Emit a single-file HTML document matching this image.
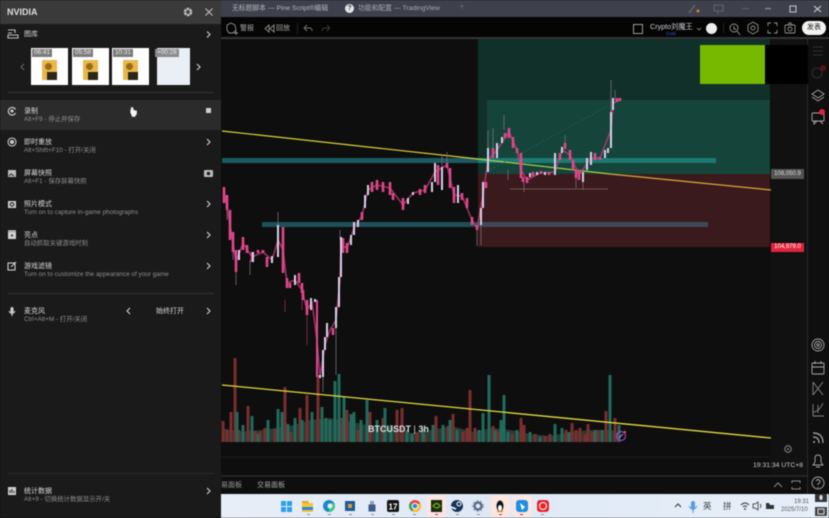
<!DOCTYPE html>
<html lang="zh"><head><meta charset="utf-8"><title>NVIDIA overlay</title>
<style>
html,body{margin:0;padding:0;background:#0e0e0e}
#w{position:relative;width:829px;height:518px;overflow:hidden;background:#0e0e0e;filter:blur(.55px);font-family:"Liberation Sans","Noto Sans CJK SC",sans-serif}
#w div{position:absolute;white-space:nowrap}
.t{left:24px;font-size:7px;line-height:9px;color:#d8d8d8}
.s{left:24px;font-size:6.4px;line-height:8px;color:#8e8e8e}
.th{background:#fff;height:37px;top:48px}
.lb{background:#7b7b7b;color:#eee;font-size:6.4px;line-height:8px;top:49px;height:8px;padding:0 2px}
.sep{background:#333;height:1px;left:8px;width:206px}
svg{position:absolute;overflow:visible}
</style></head><body><div id="w">

<!-- browser tabs -->
<div style="left:221px;top:0;width:608px;height:17px;background:#3e404c"></div>
<div style="left:232px;top:4px;font-size:6.8px;line-height:9px;color:#b4b6bd">无标题脚本 — Pine Script®编辑</div>
<div style="left:358px;top:4px;font-size:6.8px;line-height:9px;color:#a8aab2">功能和配置 — TradingView</div>
<div style="left:345px;top:4px;width:9px;height:9px;border-radius:50%;background:#e6e6e8;color:#3e404c;font-size:7px;line-height:9px;text-align:center;font-weight:bold">?</div>
<div style="left:459px;top:3px;font-size:10px;line-height:10px;color:#62646f">+</div>

<!-- toolbar -->
<div style="left:221px;top:17px;width:608px;height:21px;background:#050505"></div>
<div style="left:221px;top:37px;width:608px;height:2px;background:#333"></div>
<div style="left:240px;top:24px;font-size:7px;line-height:9px;color:#aaa">警报</div>
<div style="left:276px;top:24px;font-size:7px;line-height:9px;color:#aaa">回放</div>
<div style="left:297px;top:23px;width:1px;height:11px;background:#222"></div>
<div style="left:650px;top:22px;font-size:7.2px;line-height:9px;color:#ccc">Crypto刘魔王</div>
<div style="left:666px;top:31px;font-size:4.5px;line-height:5px;color:#3b5bd6">Gold</div>
<div style="left:633px;top:24px;width:8px;height:8px;border:1px solid #999"></div>
<div style="left:706px;top:23px;width:11px;height:11px;border-radius:50%;background:#eee"></div>
<div style="left:723px;top:23px;width:1px;height:10px;background:#222"></div>
<div style="left:802px;top:21px;width:24px;height:14px;border-radius:7px;background:#f2f2f2;color:#222;font-size:7px;line-height:14px;text-align:center">发表</div>

<!-- chart zones -->
<div style="left:478px;top:39px;width:292px;height:61px;background:#12302a"></div>
<div style="left:478px;top:100px;width:9px;height:74px;background:#12302a"></div>
<div style="left:487px;top:100px;width:283px;height:74px;background:#15443a"></div>
<div style="left:478px;top:174px;width:292px;height:73px;background:#3a1a1c"></div>
<div style="left:222px;top:158px;width:256px;height:5px;background:#1b5a62"></div>
<div style="left:478px;top:158px;width:238px;height:5px;background:#1c7a70"></div>
<div style="left:262px;top:222px;width:216px;height:5px;background:#1d5058"></div>
<div style="left:478px;top:222px;width:230px;height:5px;background:#3e4a55"></div>
<div style="left:771px;top:39px;width:36px;height:437px;background:#111"></div>
<div style="left:807px;top:39px;width:1px;height:455px;background:#2a2a2a"></div>
<div style="left:808px;top:39px;width:21px;height:455px;background:#0f0f0f"></div>
<div style="left:700px;top:45px;width:65px;height:39px;background:#76b900"></div>
<div style="left:765px;top:45px;width:43px;height:39px;background:#000"></div>

<svg style="left:0;top:0" width="829" height="518" viewBox="0 0 829 518" fill="none">
<!-- volume underlay -->
<path fill="#2a3a34" d="M222 442V428L240 432L262 430L290 426L310 420L330 418L352 422L372 426L392 428L412 433L432 430L452 426L472 432L492 428L510 430L530 434L550 436L570 432L590 430L610 430L618 432V442Z"/>
<!-- volume -->
<path stroke="#7a2e2e" stroke-width="3" d="M223 421V442M227 430V442M231 412V442M235 358V442M239 430V442M248 406V442M255 431V442M260 432V442M265 428V442M275 429V442M285 387V442M291 432V442M300 408V442M307 395V442M318 375V442M342 418V442M347 410V442M358 430V442M370 412V442M383 418V442M397 410V442M402 408V442M417 432V442M425 434V442M436 416V442M448 426V442M453 414V442M463 432V442M467 428V442M470 390V442M475 428V442M493 426V442M498 431V442M512 434V442M521 418V442M524 425V442M535 434V442M545 436V442M550 434V442M566 430V442M572 423V442M576 430V442M580 428V442M585 434V442M588 424V442M592 432V442M598 430V442M606 411V442M615 418V442"/>
<path stroke="#1f6b5c" stroke-width="3" d="M237 412V442M243 425V442M252 416V442M258 434V442M268 420V442M278 409V442M282 412V442M288 424V442M295 418V442M302 420V442M312 412V442M322 407V442M326 418V442M330 420V442M335 381V442M339 374V442M344 397V442M351 414V442M354 412V442M361 420V442M367 400V442M377 420V442M385 408V442M391 425V442M407 430V442M412 434V442M423 428V442M433 425V442M443 425V442M450 420V442M457 430V442M479 430V442M483 413V442M489 375V442M495 430V442M501 420V442M504 395V442M508 432V442M517 430V442M530 432V442M540 437V442M555 424V442M562 428V442M569 432V442M595 430V442M602 430V442M610 375V442M619 425V442"/>
<!-- trend lines -->
<path stroke="#d9d23a" stroke-width="1.2" d="M222 131L478 159"/>
<path stroke="#a9d24a" stroke-width="1.2" d="M478 159L610 174"/>
<path stroke="#dba93a" stroke-width="1.2" d="M610 174L771 190"/>
<path stroke="#e2dc3c" stroke-width="1.3" d="M222 385L771 438"/>
<path stroke="#6d5555" stroke-width="1" d="M510 189H608"/>
<path stroke="#2c6a58" stroke-width=".6" stroke-dasharray="2 2" d="M490 170L610 105"/>
<!-- wicks -->
<path stroke="#7a6a78" stroke-width=".8" d="M611 80V112M615 90V100M504 115V130M493 128V150M488 130V150M236 272V285M323 377V392M336 328V375M340 230V240M227 210V220M278 212V226M442 155V170M447 152V165M481 225V245M477 230V246M576 178V188M583 182V190M508 170V180M565 135V145M524 182V192M233 252V260M250 260V275"/>
<path stroke="#8c2a58" stroke-width=".8" d="M307 315V345M285 300V312M302 293V310"/>
<!-- continuity underlay -->
<path stroke="#c2407e" stroke-width="1.6" opacity=".75" stroke-linejoin="round" d="M224 190L230 225L236 262L243 243L252 257L263 252L272 260L278 240L283 250L287 283L295 280L302 290L307 310L312 302L317 340L320 377L325 345L330 330L336 320L340 280L341 245L347 248L354 228L362 216L368 190L377 185L390 188L403 205L413 193L425 190L435 172L447 165L454 195L462 196L472 220L477 228L483 195L488 160L497 150L509 132L517 150L521 170L527 180L540 173L555 172L562 150L570 155L579 175L591 158L600 158L611 130L613 103L620 100"/>
<!-- candles -->
<path stroke="#e0478a" stroke-width="2.6" d="M224 187V203M227 195V210M230 210V240M233 232V252M236 250V272M243 237V250M247 245V253M252 252V262M258 250V253M263 250V253M267 257V267M283 227V273M287 278V288M290 283V288M299 273V283M302 283V293M303 290V300M307 300V315M333 328V335M343 238V253M347 243V253M362 212V220M372 182V192M377 180V190M383 182V192M390 182V195M393 193V200M403 198V210M420 189V195M425 185V193M438 165V185M447 163V168M450 168V188M454 187V203M462 193V200M467 198V208M472 217V225M477 225V230M486 182V188M493 148V158M505 133V138M509 128V138M513 137V148M517 148V153M521 153V178M523 177V182M527 177V183M533 172V176M541 171V174M549 172V175M560 153V160M565 143V149M570 150V160M573 160V170M576 170V178M579 170V180M595 153V160M600 157V160M617 98V102M620 98V101"/>
<path stroke="#e0478a" stroke-width="2" d="M317 300V377"/>
<path stroke="#d8d0e8" stroke-width="2" d="M239 250V260M253 252V262M272 256V263M278 225V257M295 275V285M311 298V310M315 299V302M320 375V378M323 350V377M325 337V350M327 323V337M336 307V328M339 277V307M341 237V277M351 235V245M354 222V235M358 220V227M365 195V208M368 185V195M408 198V204M413 192V195M432 182V192M435 163V182M442 167V190M458 185V203M481 208V225M483 182V208M488 148V172M497 143V158M502 137V143M530 173V177M537 172V175M545 172V175M555 153V175M562 147V153M583 172V182M587 158V170M591 152V165M605 150V158M608 148V153M611 112V148M613 98V110"/>
<!-- cursor icon -->
<circle cx="621" cy="436" r="4.5" stroke="#a040c0" stroke-width="1.2"/>
<path d="M619 438L623 434" stroke="#c080e0"/><circle cx="625" cy="432" r="1.2" fill="#f04050"/>
<circle cx="788" cy="449" r="3.2" stroke="#888"/><circle cx="788" cy="449" r="1" fill="#888"/>
<!-- window controls -->
<g stroke="#8f919a"><path d="M689 13L695 5" stroke="#5f616c" stroke-width="1.5"/><circle cx="698" cy="11" r="1.5" fill="#c88a2c" stroke="none"/><rect x="714" y="5" width="9" height="6" stroke="#5f616c"/><path d="M718 11V14" stroke="#5f616c"/><path d="M742 8.5H749" stroke="#5f616c"/><path d="M765 8.5H771" stroke-width="1.2"/><rect x="790" y="6" width="6" height="6" stroke-width="1.1" stroke="#c0c0c6"/><path d="M814 6L821 12M821 6L814 12" stroke="#d0d0d4" stroke-width="1.1"/></g>
<!-- toolbar icons -->
<g stroke="#909090" stroke-width=".9">
<path d="M227 25L231 23L235 25L236 30L233 33L229 33L227 30Z"/><path d="M234 33H238M236 31V35"/>
<path d="M269 25L265 28.500L269 32ZM274 25L270 28.500L274 32Z"/>
<path d="M304 28L307 25M304 28L307 31M305 28H310Q312 28 312 31" stroke="#777"/>
<path d="M330 28L327 25M330 28L327 31M329 28H325Q322 28 322 31" stroke="#3c3c3c"/>
<path d="M697 28L699 30L701 28" stroke="#777"/>
<circle cx="734" cy="28" r="4"/><path d="M737 31L740 35M734 26V29H736"/>
<path d="M753 22L758 25V31L753 34L748 31V25Z"/><circle cx="753" cy="28" r="2"/>
<path d="M768 26V23H771M774 23H777V26M777 30V33H774M771 33H768V30"/>
<rect x="785" y="25" width="10" height="8" rx="1"/><circle cx="790" cy="29" r="2"/><path d="M788 25L789 23H791L792 25"/>
</g>
<!-- right rail icons -->
<g stroke="#303030"><path d="M813 47H823M813 51H823M813 55H823"/><circle cx="817" cy="73" r="5"/></g><circle cx="823" cy="68" r="3" fill="#5a1214"/>
<g stroke="#a8a8a8" stroke-width=".9">
<path d="M818 90L824 94L818 98L812 94ZM812 97L818 101L824 97"/>
<rect x="812" y="113" width="12" height="8" rx="1"/><path d="M814 121V124L817 121M820 121L823 124"/>
<circle cx="818" cy="345" r="6"/><circle cx="818" cy="345" r="3.500"/><circle cx="818" cy="345" r="1.200"/>
<rect x="812" y="363" width="12" height="11" rx="1"/><path d="M812 367H824M815 361V364M821 361V364"/>
<path d="M813 382L823 395M823 382L813 395M813 382V395" stroke="#888"/>
<path d="M813 404V416M813 416H824M813 412Q819 412 823 403M818 405V413" stroke="#888"/>
<path d="M813 437Q819 437 819 443M813 433Q823 433 823 443" stroke-width="1.200"/>
<path d="M813 465H823L821 462V458Q821 455 818 455Q815 455 815 458V462ZM816 467H820"/>
<circle cx="818" cy="483" r="6"/><path d="M816 481Q818 478 820 481Q820 483 818 484V485M818 487V488"/>
</g>
<circle cx="822" cy="112" r="3" fill="#e2233d"/>
<circle cx="814" cy="442" r="1" fill="#a8a8a8"/>
<path d="M774 487L778 483L782 487" stroke="#888"/>
<path d="M792 483V481H800V483M792 487V489H800V487" stroke="#888"/>
<path d="M221 457H770" stroke="#1a1a1a"/>
<path d="M221 476H807" stroke="#2b2b2b" stroke-width="1.500"/>
</svg>

<div style="left:368px;top:423px;font-size:9px;line-height:12px;font-weight:bold;color:#dcdcdc">BTCUSDT <span style="font-weight:normal">|</span> 3h</div>
<div style="left:753px;top:461px;font-size:6.8px;line-height:9px;color:#ccc">19:31:34 UTC+8</div>
<div style="left:771px;top:169px;width:33px;height:10px;background:#555;color:#ddd;font-size:6px;line-height:10px;text-align:center">108,050.9</div>
<div style="left:771px;top:243px;width:33px;height:9px;background:#e2233d;color:#fff;font-size:6px;line-height:9px;text-align:center">104,979.0</div>
<div style="left:221px;top:481px;font-size:7px;line-height:9px;color:#999">易面板</div>
<div style="left:257px;top:481px;font-size:7px;line-height:9px;color:#aaa">交易面板</div>

<!-- taskbar -->
<div style="left:221px;top:494px;width:608px;height:24px;background:linear-gradient(90deg,#e8eef8,#dfe9f6 40%,#e6eff9)"></div>
<div style="left:427px;top:495px;width:19px;height:22px;background:#fbe6e2;border-radius:3px"></div>
<div style="left:491px;top:495px;width:19px;height:22px;background:#fbe6e2;border-radius:3px"></div>
<div style="left:513px;top:495px;width:19px;height:22px;background:#fbe6e2;border-radius:3px"></div>
<svg style="left:0;top:0" width="829" height="518" viewBox="0 0 829 518" fill="none">
<g fill="#2aa0ea"><rect x="281" y="501" width="5" height="5"/><rect x="287" y="501" width="5" height="5"/><rect x="281" y="507" width="5" height="5"/><rect x="287" y="507" width="5" height="5"/></g>
<path d="M302 503H313V512H302Z" fill="#f6c33b"/><path d="M302 501H308L309 503H302Z" fill="#e6a820"/><path d="M302 507H313V510H302Z" fill="#2a8ad8"/>
<circle cx="329" cy="506" r="6" fill="#1a88cc"/><path d="M329 506a3 3 0 0 1 6 0a6 6 0 0 1-6 6Z" fill="#3ecb7a"/><circle cx="330" cy="506" r="2.500" fill="#e8eef8"/>
<rect x="345" y="501" width="10" height="10" fill="#1c5a9a"/><rect x="348" y="504" width="4" height="4" fill="#e0a030"/>
<path d="M369 505H375V511H369ZM371 505V501M373 505V501" fill="#3a5a8a" stroke="#3a5a8a"/>
<rect x="387" y="500" width="12" height="12" rx="2" fill="#141414"/><text x="393" y="509.500" font-size="8" font-weight="bold" fill="#fff" text-anchor="middle" font-family="Liberation Sans">17</text>
<circle cx="415" cy="506" r="6" fill="#e4483a"/><path d="M415 506L420.200 503A6 6 0 0 1 412 511.200Z" fill="#f5c22c"/><path d="M415 506L412 511.200A6 6 0 0 1 409.800 503Z" fill="#3aa655"/><circle cx="415" cy="506" r="2.800" fill="#3b7fe0" stroke="#fff"/>
<rect x="431" y="500" width="11" height="12" fill="#1c2a12"/><path d="M433 506Q437 501 440 506Q437 510 433 506Z" stroke="#76b900" stroke-width="1.200"/>
<circle cx="457" cy="506" r="6" fill="#17355c"/><circle cx="459" cy="504" r="2" stroke="#fff"/><path d="M451 507L456 509" stroke="#fff" stroke-width="1.500"/>
<circle cx="478" cy="506" r="3.500" stroke="#5a6e88" stroke-width="2.500"/><circle cx="478" cy="506" r="5.500" stroke="#8a9ab0" stroke-width="1" stroke-dasharray="2 2"/>
<ellipse cx="500" cy="506" rx="3.500" ry="5.500" fill="#111"/><ellipse cx="500" cy="508" rx="2" ry="3" fill="#fff"/><path d="M497 511.500H503" stroke="#e88a20" stroke-width="1.200"/>
<rect x="516" y="500" width="12" height="12" rx="3" fill="#1c8fe0"/><path d="M520 503L525 507L522 510Z" fill="#fff"/>
<rect x="537" y="500" width="12" height="12" rx="3" fill="#e8232a"/><circle cx="543" cy="506" r="3.500" stroke="#fff"/>
<g fill="#8a8f98"><rect x="307" y="514" width="3" height="1"/><rect x="328" y="514" width="3" height="1"/><rect x="349" y="514" width="3" height="1"/><rect x="371" y="514" width="3" height="1"/><rect x="392" y="514" width="3" height="1"/><rect x="413" y="514" width="3" height="1"/><rect x="456" y="514" width="3" height="1"/><rect x="477" y="514" width="3" height="1"/><rect x="541" y="514" width="3" height="1"/></g>
<g fill="#d22"><rect x="435" y="514" width="3" height="1"/><rect x="499" y="514" width="3" height="1"/><rect x="520" y="514" width="3" height="1"/></g>
<path d="M675 507L678 504L681 507" stroke="#444" stroke-width="1.200"/>
<rect x="691" y="501" width="4" height="8" rx="2" fill="#5a9ae0"/><path d="M689 506Q693 513 697 506M693 510V513" stroke="#5a9ae0"/>
<path d="M741 505Q745 501 749 505M743 507Q745 505 747 507" stroke="#555" stroke-width="1.200"/><circle cx="745" cy="509" r="1" fill="#555"/>
<path d="M753 504H755L758 502V510L755 508H753Z" stroke="#555"/><path d="M760 504Q762 506 760 508" stroke="#555"/>
<path d="M766 503V509H774V505H770L769 503Z" fill="#333"/>
</svg>
<div style="left:703px;top:501px;font-size:8.5px;line-height:11px;color:#444">英</div>
<div style="left:723px;top:501px;font-size:8.5px;line-height:11px;color:#444">拼</div>
<div style="left:794px;top:498px;font-size:6px;line-height:8px;color:#555">19:31</div>
<div style="left:781px;top:506px;font-size:6px;line-height:8px;color:#555">2025/7/10</div>
<div style="left:815px;top:494px;width:12px;height:8px;background:#333"></div>
<div style="left:815px;top:507px;width:12px;height:9px;background:#444"></div>
<svg style="left:0;top:0" width="829" height="518" viewBox="0 0 829 518" fill="none"><rect x="819.500" y="495" width="3" height="5" rx="1.500" fill="#ddd"/><rect x="818" y="509" width="6" height="5" stroke="#ddd"/></svg>

<!-- NVIDIA panel -->
<div style="left:0;top:0;width:221px;height:518px;background:#1a1a1a"></div>
<div style="left:0;top:0;width:221px;height:24px;background:#3a3a3a"></div>
<div style="left:7px;top:6px;font-size:9px;line-height:12px;font-weight:bold;color:#dedede">NVIDIA</div>
<div style="left:0;top:100px;width:221px;height:30px;background:#2b2b2b"></div>
<div class="sep" style="top:92px"></div>
<div class="sep" style="top:293px"></div>
<div class="sep" style="top:473px;background:#2b2b2b"></div>

<div class="t" style="top:30px">图库</div>
<div class="th" style="left:31px;width:37px"></div><div class="th" style="left:72px;width:37px"></div><div class="th" style="left:112px;width:37px"></div><div class="th" style="left:157px;width:33px;background:#eaeff6"></div>
<div style="left:42px;top:60px;width:15px;height:20px;background:#e8b84a"></div><div style="left:83px;top:60px;width:15px;height:20px;background:#e8b84a"></div><div style="left:123px;top:60px;width:15px;height:20px;background:#e8b84a"></div>
<div style="left:47px;top:72px;width:10px;height:8px;background:#2a2618"></div><div style="left:88px;top:72px;width:10px;height:8px;background:#2a2618"></div><div style="left:128px;top:72px;width:10px;height:8px;background:#2a2618"></div>
<div style="left:45px;top:63px;width:7px;height:7px;border-radius:50%;background:#9a6a1a"></div><div style="left:86px;top:63px;width:7px;height:7px;border-radius:50%;background:#9a6a1a"></div><div style="left:126px;top:63px;width:7px;height:7px;border-radius:50%;background:#9a6a1a"></div>
<div class="lb" style="left:32px">06:41</div><div class="lb" style="left:73px">05:58</div><div class="lb" style="left:113px">10:31</div><div class="lb" style="left:155px;background:#8a8a8a">+00:28</div>

<div class="t" style="top:107px">录制</div><div class="s" style="top:116px">Alt+F9 - 停止并保存</div>
<div class="t" style="top:138px">即时重放</div><div class="s" style="top:147px">Alt+Shift+F10 - 打开/关闭</div>
<div class="t" style="top:169px">屏幕快照</div><div class="s" style="top:178px">Alt+F1 - 保存屏幕快照</div>
<div class="t" style="top:200px">照片模式</div><div class="s" style="top:209px">Turn on to capture in-game photographs</div>
<div class="t" style="top:231px">亮点</div><div class="s" style="top:240px">自动抓取关键游戏时刻</div>
<div class="t" style="top:262px">游戏滤镜</div><div class="s" style="top:271px">Turn on to customize the appearance of your game</div>
<div class="t" style="top:307px">麦克风</div><div class="s" style="top:316px">Ctrl+Alt+M - 打开/关闭</div>
<div class="t" style="top:307px;left:156px">始终打开</div>
<div class="t" style="top:487px">统计数据</div><div class="s" style="top:496px">Alt+9 - 切换统计数据显示开/关</div>

<svg style="left:0;top:0" width="221" height="518" viewBox="0 0 221 518" fill="none">
<g stroke="#cfcfcf" stroke-width="1.100">
<path d="M207 31.500L210 34.500L207 37.500M207 139L210 142L207 145M207 201L210 204L207 207M207 232L210 235L207 238M207 263L210 266L207 269M207 308L210 311L207 314M207 488L210 491L207 494M197 64L200 67L197 70"/>
<path d="M24 64L21 67L24 70" stroke="#666"/><path d="M130 308L127 311L130 314"/>
<path d="M191 12a3 3 0 1 1 -6 0a3 3 0 1 1 6 0" stroke-width="2.500" stroke-dasharray="2.500 .6" stroke="#c0c0c0"/>
<path d="M205.500 8.500L212.500 15.500M212.500 8.500L205.500 15.500" stroke="#bdbdbd"/>
<path d="M8 30H15V33M8 33H12M8 35H18V38H8Z" stroke="#bdbdbd"/>
<path d="M15.500 109.500A3.800 3.800 0 1 0 15.500 113"/><circle cx="12" cy="111" r="1" fill="#cfcfcf"/>
<circle cx="12" cy="142" r="4"/><circle cx="12" cy="142" r="1.500" fill="#cfcfcf"/>
<rect x="8" y="170" width="8" height="7" fill="#bdbdbd" stroke="none"/><path d="M9 176L11 174L14 176" stroke="#333"/>
<rect x="8" y="201" width="8" height="7" fill="#cfcfcf" stroke="none"/><circle cx="12" cy="204.500" r="1.800" stroke="#222"/>
<rect x="8" y="232" width="8" height="7" fill="#cfcfcf" stroke="none"/><path d="M8 231H16" stroke-width="1.500"/><circle cx="12" cy="235.500" r="1" fill="#222" stroke="none"/>
<rect x="8" y="263" width="7" height="7"/><path d="M11 267L16 262"/>
<rect x="10.500" y="307" width="3" height="6" rx="1.500" fill="#cfcfcf" stroke="none"/><path d="M9 311Q12 316 15 311M12 314V316"/>
<rect x="8" y="487" width="8" height="8" fill="#cfcfcf" stroke="none"/><path d="M10 493V490M12 493V489M14 493V491" stroke="#333"/>
</g>
<rect x="206" y="108" width="5" height="5" fill="#d0d0d0"/>
<rect x="204" y="170" width="9" height="7" rx="1" fill="#bbb"/><circle cx="208.500" cy="173.500" r="1.800" fill="#222"/>
<path d="M131 107L133 107L134 110L137 110.500L137 114L135 117L132 117L130 112Z" fill="#f4f4f4" stroke="#333" stroke-width=".4"/>
</svg>
</div></body></html>
